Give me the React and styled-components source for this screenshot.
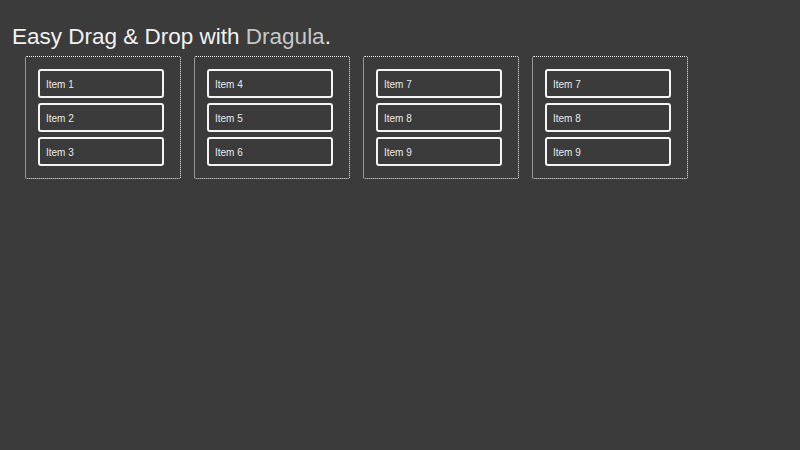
import React from 'react'
import styled, { createGlobalStyle } from 'styled-components';

const GlobalStyle = createGlobalStyle`
    html, body {
        margin:0;
        padding:0;
        background:#3b3b3b;
        font-family:"Liberation Sans", Arial, sans-serif;
    }
`;

const columns = [
    ['Item 1', 'Item 2', 'Item 3'],
    ['Item 4', 'Item 5', 'Item 6'],
    ['Item 7', 'Item 8', 'Item 9'],
    ['Item 7', 'Item 8', 'Item 9'],
];

function App() {
    return (
        <Page>
            <GlobalStyle />
            <Title>Easy Drag &amp; Drop with <Accent>Dragula</Accent>.</Title>
            <Board>
                {columns.map((items, i) => (
                    <Column key={i}>
                        {items.map((item, j) => (
                            <Item key={j}>{item}</Item>
                        ))}
                    </Column>
                ))}
            </Board>
        </Page>
    )
};

const Page = styled.div`
    width:800px;
    height:450px;
    padding:24px 0 0 12px;
    box-sizing:border-box;
`;
const Title = styled.h1`
    margin:0 0 6px;
    font-size:22.5px;
    line-height:26px;
    font-weight:normal;
    color:#f2f2f2;
`;
const Accent = styled.span`
    color:#c8c8c8;
`;
const Board = styled.div`
    display:flex;
    gap:13px;
    margin-left:13px;
`;
const Column = styled.div`
    width:156px;
    box-sizing:border-box;
    border:1px dotted #f4f4f4;
    border-radius:2px;
    padding:12px 12px 12px;
    display:flex;
    flex-direction:column;
    gap:5px;
`;
const Item = styled.div`
    width:126px;
    height:29px;
    box-sizing:border-box;
    border:2px solid #f4f4f4;
    border-radius:3px;
    padding:1px 6px 0;
    display:flex;
    align-items:center;
    font-size:10px;
    color:#eaeaea;
`;

export default App;
